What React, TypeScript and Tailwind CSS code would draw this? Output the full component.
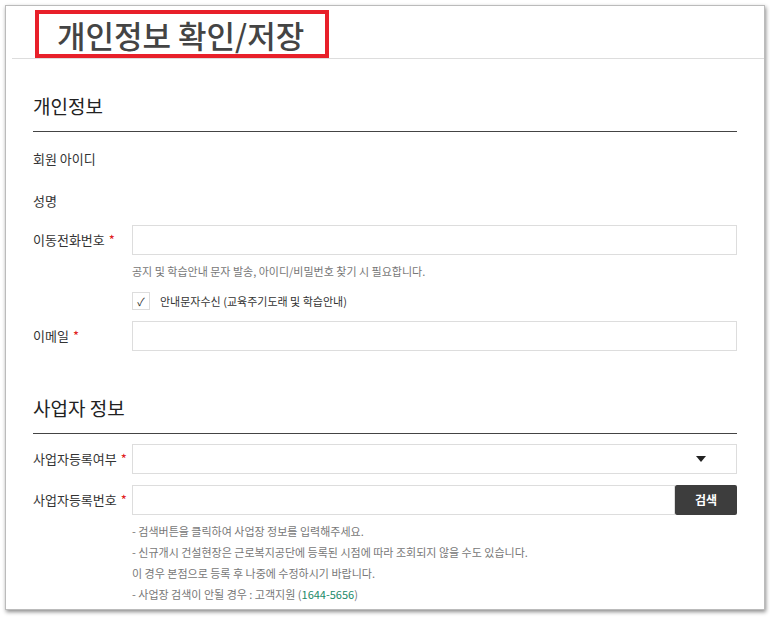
export default function App() {
  const font = { fontFamily: '"Noto Sans CJK KR", "Noto Sans", sans-serif' };
  const star = <span className="ml-1 text-[#e02020]">*</span>;
  return (
    <div className="h-[617px] w-[770px] bg-white p-[5px]" style={font}>
      <div className="h-[605px] w-[760px] overflow-hidden border border-[#bbb] bg-white shadow-[1px_2px_4px_rgba(0,0,0,0.45)]">
        <div className="ml-[29px] mt-[4px] flex h-[48px] w-[294px] items-center border-[4px] border-[#e8202a] pl-[18px] text-[31px] font-medium leading-none text-[#444]">
          개인정보 확인/저장
        </div>
        <div className="ml-[6px] border-t border-[#ddd]" />
        <div className="px-[27px] pr-[27px] text-[13px] text-[#333]">
          <div className="mt-[33px] border-b border-[#444] pb-[10px] text-[19px] text-[#222]">개인정보</div>
          <div className="mt-[13px] flex h-[28px] items-center">회원 아이디</div>
          <div className="mt-[14px] flex h-[28px] items-center">성명</div>
          <div className="mt-[10px] flex items-center">
            <div className="w-[99px]">이동전화번호{star}</div>
            <div className="h-[30px] flex-1 border border-[#ddd]" />
          </div>
          <div className="ml-[99px] mt-[8px] text-[11px] text-[#777]">공지 및 학습안내 문자 발송, 아이디/비밀번호 찾기 시 필요합니다.</div>
          <div className="ml-[99px] mt-[13px] flex items-center text-[11px] text-[#333]">
            <span className="flex h-[18px] w-[18px] items-end justify-center border border-[#ddd] text-[11px] leading-[15px]">✓</span>
            <span className="ml-[10px]">안내문자수신 (교육주기도래 및 학습안내)</span>
          </div>
          <div className="mt-[11px] flex items-center">
            <div className="w-[99px]">이메일{star}</div>
            <div className="h-[30px] flex-1 border border-[#ddd]" />
          </div>
          <div className="mt-[43px] border-b border-[#444] pb-[10px] text-[19px] text-[#222]">사업자 정보</div>
          <div className="mt-[10px] flex items-center">
            <div className="w-[99px]">사업자등록여부{star}</div>
            <div className="flex h-[30px] flex-1 items-center justify-end border border-[#ddd] pr-[30px]">
              <span className="h-0 w-0 border-x-[5px] border-t-[6px] border-x-transparent border-t-[#222]" />
            </div>
          </div>
          <div className="mt-[11px] flex items-center">
            <div className="w-[99px]">사업자등록번호{star}</div>
            <div className="h-[30px] flex-1 border border-[#ddd]" />
            <div className="flex h-[30px] w-[62px] items-center justify-center rounded-[2px] bg-[#3d3d3d] text-[12px] font-bold text-white">검색</div>
          </div>
          <div className="ml-[99px] mt-[8px] space-y-[5px] text-[11px] leading-[16px] text-[#777]">
            <div>- 검색버튼을 클릭하여 사업장 정보를 입력해주세요.</div>
            <div>- 신규개시 건설현장은 근로복지공단에 등록된 시점에 따라 조회되지 않을 수도 있습니다.</div>
            <div>이 경우 본점으로 등록 후 나중에 수정하시기 바랍니다.</div>
            <div>- 사업장 검색이 안될 경우 : 고객지원 (<span className="text-[#1a8a6a]">1644-5656</span>)</div>
          </div>
        </div>
      </div>
    </div>
  );
}
